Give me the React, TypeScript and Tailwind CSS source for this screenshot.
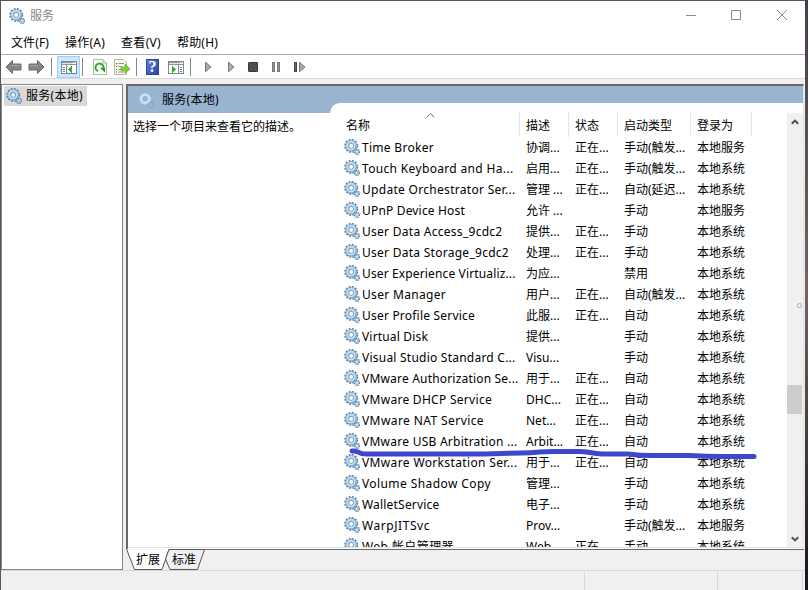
import { useLayoutEffect, useRef } from 'react';

type Row = [name: string, nameWidth: number, desc: string, running: boolean, startup: string, logon: string];

const ROWS: Row[] = [
  ['Time Broker', 72, '协调...', true, '手动(触发...', '本地服务'],
  ['Touch Keyboard and Ha...', 151.5, '启用...', true, '手动(触发...', '本地系统'],
  ['Update Orchestrator Ser...', 153.5, '管理 ...', true, '自动(延迟...', '本地系统'],
  ['UPnP Device Host', 103, '允许 ...', false, '手动', '本地服务'],
  ['User Data Access_9cdc2', 140.5, '提供...', true, '手动', '本地系统'],
  ['User Data Storage_9cdc2', 147, '处理...', true, '手动', '本地系统'],
  ['User Experience Virtualiz...', 153.5, '为应...', false, '禁用', '本地系统'],
  ['User Manager', 84, '用户...', true, '自动(触发...', '本地系统'],
  ['User Profile Service', 113, '此服...', true, '自动', '本地系统'],
  ['Virtual Disk', 66, '提供...', false, '手动', '本地系统'],
  ['Visual Studio Standard C...', 153.5, 'Visu...', false, '手动', '本地系统'],
  ['VMware Authorization Se...', 156.5, '用于...', true, '自动', '本地系统'],
  ['VMware DHCP Service', 130, 'DHC...', true, '自动', '本地系统'],
  ['VMware NAT Service', 122, 'Net...', true, '自动', '本地系统'],
  ['VMware USB Arbitration ...', 155.5, 'Arbit...', true, '自动', '本地系统'],
  ['VMware Workstation Ser...', 155.5, '用于...', true, '自动', '本地系统'],
  ['Volume Shadow Copy', 129, '管理...', false, '手动', '本地系统'],
  ['WalletService', 77.5, '电子...', false, '手动', '本地系统'],
  ['WarpJITSvc', 68, 'Prov...', false, '手动(触发...', '本地服务'],
  ['Web 帐户管理器', 92, 'Web ...', true, '手动', '本地系统'],
];

/* Spreads the letters of a label over a given width. */
function Fit({ text, width }: { text: string; width: number }) {
  const ref = useRef<HTMLSpanElement>(null);
  useLayoutEffect(() => {
    const el = ref.current;
    if (!el) return;
    el.style.letterSpacing = '0px';
    const natural = el.getBoundingClientRect().width;
    el.style.letterSpacing = `${(width - natural) / text.length}px`;
  }, [text, width]);
  return <span ref={ref} className="inline-block whitespace-pre">{text}</span>;
}

function Gears({ className = '', dim = false }: { className?: string; dim?: boolean }) {
  return (
    <svg className={`h-4 w-4 shrink-0 ${className}`} viewBox="0 0 16 16" fill="none">
      {!dim && <circle cx="7.2" cy="6.9" r="6" stroke="#527c9e" strokeWidth="2" strokeDasharray="1.75 1.39" />}
      <circle cx="7.2" cy="6.9" r="4.3" stroke={dim ? '#b5dcec' : '#86add0'} strokeWidth={dim ? 2.8 : 3.4} />
      <circle cx="7" cy="6.6" r="3.9" stroke={dim ? '#cdeaf5' : '#c9e5f5'} strokeWidth="1.5" />
      {!dim && <circle cx="7.2" cy="6.9" r="2.3" stroke="#5b87ad" strokeWidth="0.9" />}
      <circle cx="7.2" cy="6.9" r="1.8" fill={dim ? '#99b4d1' : '#fff'} />
      <circle cx="13" cy="12.8" r="2.3" stroke={dim ? '#6f96b3' : '#4f7b9e'} strokeWidth="1.8" strokeDasharray="1.05 .75" />
      <circle cx="13" cy="12.8" r="1.5" stroke={dim ? '#9bbdd2' : '#9dbfd8'} strokeWidth="1.3" />
    </svg>
  );
}

function Arrow({ flip = false, className = '' }: { flip?: boolean; className?: string }) {
  return (
    <svg className={`h-4 w-[17px] ${className}`} viewBox="0 0 17 16">
      <path
        d="M1 8 7.5 1.5V5H16V11H7.5V14.5Z"
        fill="#858585"
        stroke="#686868"
        strokeWidth="1"
        transform={flip ? 'translate(17 0) scale(-1 1)' : undefined}
      />
      <path d={flip ? 'M2 6.5H10' : 'M7 6.5H15'} stroke="#a5a5a5" />
    </svg>
  );
}

function PanelIcon({ right = false }: { right?: boolean }) {
  return (
    <svg className="h-[14px] w-4" viewBox="0 0 16 14" shapeRendering="crispEdges">
      <rect x=".5" y=".5" width="15" height="12" fill="#fff" stroke="#7c8791" />
      <path d="M1 1.5H15M1 3.5H15" stroke="#8c969f" />
      <path d="M1 2.5H11" stroke="#dfe7ed" />
      <path d="M12 1.5h1M14 1.5h1" stroke="#fff" />
      {right ? (
        <>
          <path d="M10.5 4V13" stroke="#7c8791" />
          <path d="M12 6.5h2M12 8.5h2M12 10.5h2" stroke="#5686b0" />
          <path d="M4 5v7l4-3.5z" fill="#42ad27" />
        </>
      ) : (
        <>
          <path d="M5.5 4V13" stroke="#7c8791" />
          <path d="M2 6.5h2M2 8.5h2M2 10.5h2" stroke="#5686b0" />
          <path d="M11 5v7L7 8.5z" fill="#42ad27" />
        </>
      )}
    </svg>
  );
}

function Divider({ className }: { className: string }) {
  return <i className={`h-[18px] w-px shrink-0 bg-[#858585] ${className}`} />;
}

function Play({ className = '' }: { className?: string }) {
  return (
    <svg className={`h-3 w-[8px] ${className}`} viewBox="0 0 8 12">
      <path d="M1.5 1.2V10.8L7 6Z" fill="#aaa" stroke="#787878" />
    </svg>
  );
}

function Toolbar() {
  return (
    <div className="flex h-[24px] shrink-0 items-center border-b border-[#d9d9d9] bg-white pt-px pl-[4px] [&>svg]:shrink-0">
      <Arrow />
      <Arrow flip className="ml-[6px]" />
      <Divider className="ml-[6px]" />
      <span className="ml-[5px] flex h-[22px] w-[23px] shrink-0 items-center justify-center border border-[#99d1ff] bg-[#cce8ff] pt-[2px]">
        <PanelIcon />
      </span>
      <Divider className="ml-[2px]" />
      <svg className="ml-[10px] h-4 w-[14px]" viewBox="0 0 14 16">
        <path d="M.5.5H10L13.5 4V15.5H.5Z" fill="#fcfcf6" stroke="#b4b4a8" />
        <path d="M10 .5V4H13.5" fill="#e5e5df" stroke="#b4b4a8" />
        <path d="M5 12.2A4 4 0 1 1 10.4 9.5" fill="none" stroke="#35a936" strokeWidth="2" />
        <path d="M7 8.8H12V13.6Z" fill="#22942c" />
      </svg>
      <svg className="ml-[7px] h-4 w-[17px]" viewBox="0 0 17 16">
        <path d="M.5.5H9L12.5 4V15.5H.5Z" fill="#fffbe5" stroke="#b9b69c" />
        <path d="M2 4.5h1.2M2 7.5h1.2M2 10.5h1.2M2 13h1.2" stroke="#5b5575" />
        <path d="M4.5 4.5H10M4.5 7.5H8M4.5 10.5H8M4.5 13H10" stroke="#8f8ca5" />
        <path d="M7 8.2H11V5.2L16 9.8L11 14.4V11.6H7Z" fill="#79cf3b" stroke="#56a927" strokeWidth=".7" />
      </svg>
      <Divider className="ml-[5px]" />
      <span className="ml-[9px] flex h-4 w-[13px] shrink-0 items-center justify-center border border-[#2e429b] bg-linear-to-br from-[#6484d9] to-[#2443a2] font-['Liberation_Serif',serif] text-[16px] leading-none font-bold text-white">
        ?
      </span>
      <span className="ml-[9px] pt-[2px]"><PanelIcon right /></span>
      <Divider className="ml-[6px]" />
      <Play className="ml-[13px]" />
      <Play className="ml-[15px]" />
      <i className="ml-[13px] h-[10px] w-[10px] rounded-[1px] border border-[#383838] bg-[#505050]" />
      <i className="ml-[14px] h-[10px] w-[3px] border border-[#777] bg-[#929292]" />
      <i className="ml-[2px] h-[10px] w-[3px] border border-[#777] bg-[#929292]" />
      <i className="ml-[14px] h-[10px] w-[3px] border border-[#444] bg-[#666]" />
      <Play className="ml-[1px]" />
    </div>
  );
}

function Chevron({ className }: { className: string }) {
  return (
    <svg className={className} viewBox="0 0 8 6" fill="none">
      <path d="M.8 4.8 4 1.6 7.2 4.8" stroke="#505050" strokeWidth="2" />
    </svg>
  );
}

function ServiceList() {
  const cell = 'shrink-0 whitespace-pre';
  return (
    <div className="flex h-full min-w-0 flex-1 flex-col overflow-hidden">
      <div className="relative flex h-6 shrink-0 leading-[25px]">
        <span className="w-[190px] border-r border-[#e5e5e5] pl-[16px]">名称</span>
        <span className="w-[49px] border-r border-[#e5e5e5] pl-[6px]">描述</span>
        <span className="w-[49px] border-r border-[#e5e5e5] pl-[6px]">状态</span>
        <span className="w-[73px] border-r border-[#e5e5e5] pl-[6px]">启动类型</span>
        <span className="w-[61px] border-r border-[#e5e5e5] pl-[6px]">登录为</span>
        <svg className="absolute top-0 left-[96px] h-[5px] w-[9px]" viewBox="0 0 9 5" fill="none">
          <path d="M.7 4.3 4.5.7 8.3 4.3" stroke="#6b6b6b" />
        </svg>
      </div>
      {ROWS.map(([name, width, desc, running, startup, logon]) => (
        <div key={name} className="flex h-[21px] shrink-0 pl-[14px] leading-[22px]">
          <Gears className="mt-[2px]" />
          <span className={`${cell} w-[166px] pl-[2px]`}><Fit text={name} width={width} /></span>
          <span className={`${cell} w-[49px]`}>{desc}</span>
          <span className={`${cell} w-[49px]`}>{running ? '正在...' : ''}</span>
          <span className={`${cell} w-[73px]`}>{startup}</span>
          <span className={cell}>{logon}</span>
        </div>
      ))}
    </div>
  );
}

function ScrollBar() {
  return (
    <div className="flex w-4 shrink-0 flex-col items-center bg-[#f0f0f0]">
      <Chevron className="mt-[6px] h-[6px] w-[8px]" />
      <div className="mt-[178px] h-[5px] w-[5px] translate-x-[4px] rounded-full border border-[#9da4b9] bg-white" />
      <div className="mt-[77px] h-[29px] w-[15px] self-start bg-[#cdcdcd]" />
      <Chevron className="mt-auto mb-[5px] h-[6px] w-[8px] rotate-180" />
    </div>
  );
}

function Tabs() {
  return (
    <div className="relative flex h-[21px] shrink-0">
      <svg className="absolute inset-0 h-[21px] w-[678px]" viewBox="0 0 678 21" fill="none">
        <path d="M42 .5H678" stroke="#696969" />
        <path d="M.5 0 8.5 20.5H36L43 .5V0Z" fill="#fff" />
        <path d="M.5 0 8.5 20.5H36L43 .5" stroke="#555" />
        <path d="M39.5 10 44 20.5H71.5L78.5 .5H43Z" fill="#f0f0f0" stroke="#555" />
      </svg>
      <span className="relative pl-[10px] leading-[22px]">扩展</span>
      <span className="relative pl-[12px] leading-[22px]">标准</span>
    </div>
  );
}

export default function App() {
  return (
    <div className="relative flex h-[590px] w-[808px] overflow-hidden bg-[#58504e] font-['Noto_Sans','Noto_Sans_CJK_SC',sans-serif] text-[12px] text-black">
      <div className="flex w-[805px] shrink-0 flex-col border-t border-l border-[#57565b] bg-[#f0f0f0]">
        <header className="flex h-[29px] shrink-0 items-center bg-white pl-[8px]">
          <Gears />
          <span className="ml-[5px] text-[#888]">服务</span>
          <svg className="ml-auto h-3 w-[104px] -translate-y-px" viewBox="0 0 104 12" fill="none" stroke="#8a8a8a">
            <path d="M1 6.5H11M46.5 1.5H55.5V10.5H46.5ZM92 1 102 11M102 1 92 11" />
          </svg>
          <i className="w-[16px]" />
        </header>
        <nav className="flex h-[25px] shrink-0 border-b border-[#acacac] bg-white pl-[10px] leading-[25px]">
          <span className="w-[54px]"><Fit text="文件(F)" width={38} /></span>
          <span className="w-[56px]"><Fit text="操作(A)" width={40} /></span>
          <span className="w-[56px]"><Fit text="查看(V)" width={40} /></span>
          <span><Fit text="帮助(H)" width={41} /></span>
        </nav>
        <Toolbar />
        <main className="flex h-[491px] shrink-0 pt-[5px]">
          <aside className="h-[486px] w-[122px] shrink-0 border border-[#828790] bg-white pt-[1px] pl-[2px]">
            <div className="flex h-5 w-[83px] items-center bg-[#d9d9d9] pl-[2px]">
              <Gears />
              <span className="ml-[4px] whitespace-pre"><Fit text="服务(本地)" width={57} /></span>
            </div>
          </aside>
          <div className="ml-[3px] flex w-[678px] shrink-0 flex-col">
            <section className="flex h-[465px] flex-col border-t-2 border-r border-l-2 border-[#696969] border-r-[#e3e3e3] bg-white">
              <div className="flex h-[27px] shrink-0 items-center bg-[#99b4d1]">
                <Gears dim className="ml-[10px]" />
                <span className="ml-[8px] whitespace-pre"><Fit text="服务(本地)" width={57} /></span>
                <div className="ml-auto h-[10px] w-[473px] self-end rounded-tl-[10px] bg-white" />
              </div>
              <div className="flex h-[434px] shrink-0">
                <p className="w-[202px] shrink-0 pt-[4px] pl-[5px] leading-[20px]">选择一个项目来查看它的描述。</p>
                <ServiceList />
                <ScrollBar />
              </div>
              <div className="h-px shrink-0 bg-[#e3e3e3]" />
            </section>
            <Tabs />
          </div>
        </main>
        <footer className="flex flex-1 border-t border-[#d7d7d7] pt-px">
          <span className="w-[584px] border-r border-[#d7d7d7]" />
          <span className="w-[133px] border-r border-[#d7d7d7]" />
          <span className="w-[85px] border-r border-[#d7d7d7]" />
        </footer>
      </div>
      <div className="flex-1 bg-linear-to-b from-[#424047] via-[#75645f] to-[#17151a]" />
      {/* Pen stroke drawn across the highlighted service. */}
      <svg className="absolute top-[440px] left-[340px] h-6 w-[430px]" viewBox="0 0 430 24" fill="none">
        <path
          d="M12 11C19 10 17 14 26 14H130C155 14 165 13 181 13C199 13 202 11 216 11.5H240C253 12 250 13.5 262 14H288C296 15 299 15.5 312 15.5H350C358 16 367 16.5 380 16.5H414"
          stroke="#3f48cc"
          strokeWidth="5"
          strokeLinecap="round"
          strokeLinejoin="round"
        />
      </svg>
    </div>
  );
}
